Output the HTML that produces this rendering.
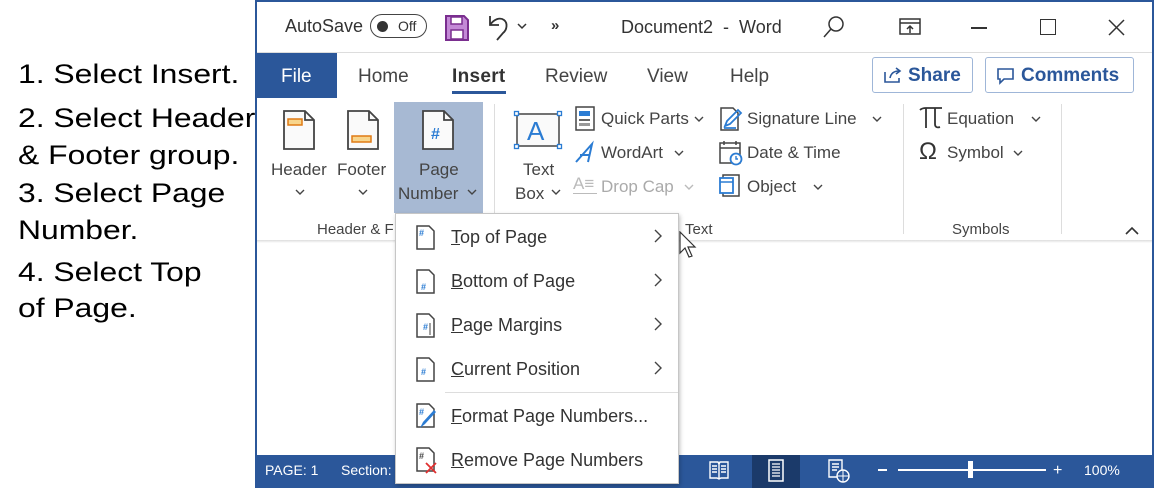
<!DOCTYPE html>
<html><head><meta charset="utf-8"><style>
*{margin:0;padding:0;box-sizing:border-box}
body{width:1154px;height:488px;background:#fff;position:relative;overflow:hidden;font-family:"Liberation Sans",Arial,sans-serif;color:#333}
.a{position:absolute;white-space:nowrap}
.step{font-size:27px;color:#000;line-height:1;transform:scaleX(1.18);transform-origin:left top}
.win{position:absolute;left:255px;top:0;width:899px;height:488px;border:2px solid #2b579a;border-bottom:none;background:#fff}
.t{font-size:18px;color:#333}
.g{font-size:15px;color:#444}
.mi{font-size:18px;color:#333}
.mi u{text-decoration:underline}
</style></head><body>
<div class="win"></div>
<div class="a step" style="left:18px;top:61px">1. Select Insert.</div>
<div class="a step" style="left:18px;top:105px">2. Select Header</div>
<div class="a step" style="left:18px;top:142px">&amp; Footer group.</div>
<div class="a step" style="left:18px;top:180px">3. Select Page</div>
<div class="a step" style="left:18px;top:217px">Number.</div>
<div class="a step" style="left:18px;top:259px">4. Select Top</div>
<div class="a step" style="left:18px;top:295px">of Page.</div>

<div class="a t" style="left:285px;top:16px">AutoSave</div>
<div class="a" style="left:370px;top:14px;width:57px;height:24px;border:1.5px solid #444;border-radius:12px"></div>
<div class="a" style="left:377px;top:21px;width:11px;height:11px;border-radius:50%;background:#333"></div>
<div class="a" style="left:398px;top:18px;font-size:14px;color:#333">Off</div>
<svg class="a" style="left:444px;top:14px" width="26" height="28" viewBox="0 0 26 28"><path d="M2 2h18l4 4v20H2z" fill="#c389d6" stroke="#7a2e8f" stroke-width="2"/><rect x="7" y="3" width="11" height="7" fill="#fff" stroke="#7a2e8f" stroke-width="1.5"/><rect x="7" y="16" width="12" height="9" fill="#fff" stroke="#7a2e8f" stroke-width="1.5"/></svg>
<svg class="a" style="left:486px;top:13px" width="30" height="30" viewBox="0 0 30 30"><path d="M4 3v9h9M4 12c4-6 10-8 14-5s3 10-1 13l-6 7" fill="none" stroke="#333" stroke-width="1.8"/></svg>
<svg class="a" style="left:517px;top:22px" width="10" height="8"><path d="M1 2l4 4 4-4" fill="none" stroke="#333" stroke-width="1.5"/></svg>
<div class="a" style="left:551px;top:17px;font-size:15px;font-weight:bold;color:#333">»</div>
<div class="a t" style="left:621px;top:17px">Document2&nbsp; -&nbsp; Word</div>
<svg class="a" style="left:822px;top:15px" width="24" height="24"><circle cx="14" cy="9" r="7" fill="none" stroke="#333" stroke-width="1.5"/><path d="M9 14l-7 8" stroke="#333" stroke-width="1.5"/></svg>
<svg class="a" style="left:899px;top:18px" width="22" height="18"><rect x="1" y="1" width="20" height="15" fill="none" stroke="#333" stroke-width="1.5"/><path d="M1 5h20M11 15V8M8 11l3-3 3 3" fill="none" stroke="#333" stroke-width="1.5"/></svg>
<div class="a" style="left:971px;top:27px;width:16px;height:1.5px;background:#333"></div>
<div class="a" style="left:1040px;top:19px;width:16px;height:16px;border:1.5px solid #333"></div>
<svg class="a" style="left:1108px;top:19px" width="17" height="17"><path d="M1 1l15 15M16 1L1 16" stroke="#333" stroke-width="1.5"/></svg>
<div class="a" style="left:257px;top:52px;width:895px;height:1px;background:#ddd"></div>
<div class="a" style="left:257px;top:53px;width:80px;height:45px;background:#2b579a"></div>
<div class="a" style="left:281px;top:66px;font-size:19px;color:#fff">File</div>
<div class="a" style="left:358px;top:66px;font-size:19px;color:#444">Home</div>
<div class="a" style="left:452px;top:66px;font-size:19px;color:#333;font-weight:bold;letter-spacing:.3px">Insert</div>
<div class="a" style="left:452px;top:91px;width:54px;height:3px;background:#2b579a"></div>
<div class="a" style="left:545px;top:66px;font-size:19px;color:#444">Review</div>
<div class="a" style="left:647px;top:66px;font-size:19px;color:#444">View</div>
<div class="a" style="left:730px;top:66px;font-size:19px;color:#444">Help</div>
<div class="a" style="left:872px;top:57px;width:101px;height:36px;border:1px solid #9fb6d8;border-radius:3px"></div>
<svg class="a" style="left:883px;top:66px" width="20" height="18"><path d="M2 6v10h14v-4M7 12c1-5 4-7 9-7M13 2l4 3-4 3" fill="none" stroke="#2b579a" stroke-width="1.6"/></svg>
<div class="a" style="left:908px;top:65px;font-size:19px;font-weight:bold;color:#2b579a">Share</div>
<div class="a" style="left:985px;top:57px;width:149px;height:36px;border:1px solid #9fb6d8;border-radius:3px"></div>
<svg class="a" style="left:996px;top:67px" width="20" height="18"><path d="M2 2h15v10H8l-4 4v-4H2z" fill="none" stroke="#2b579a" stroke-width="1.6"/></svg>
<div class="a" style="left:1021px;top:65px;font-size:19px;font-weight:bold;color:#2b579a">Comments</div>
<div class="a" style="left:257px;top:240px;width:895px;height:3px;background:linear-gradient(#ddd,#fff)"></div>
<div class="a" style="left:394px;top:102px;width:89px;height:111px;background:#a7b9d3"></div>
<svg class="a" style="left:282px;top:109px" width="34" height="42"><path d="M2 2h21l9 9v29H2z" fill="#fafafa" stroke="#444" stroke-width="1.8"/><path d="M23 2v9h9" fill="none" stroke="#444" stroke-width="1.8"/><rect x="6" y="10" width="14" height="6" fill="#f8d58c" stroke="#e07b14" stroke-width="1.5"/></svg>
<svg class="a" style="left:346px;top:109px" width="34" height="42"><path d="M2 2h21l9 9v29H2z" fill="#fafafa" stroke="#444" stroke-width="1.8"/><path d="M23 2v9h9" fill="none" stroke="#444" stroke-width="1.8"/><rect x="6" y="27" width="19" height="6" fill="#f8d58c" stroke="#e07b14" stroke-width="1.5"/></svg>
<svg class="a" style="left:421px;top:109px" width="34" height="42"><path d="M2 2h21l9 9v29H2z" fill="#fafafa" stroke="#444" stroke-width="1.8"/><path d="M23 2v9h9" fill="none" stroke="#444" stroke-width="1.8"/><text x="10" y="30" font-size="16" fill="#2b7cd3" font-family="Liberation Sans" font-weight="bold">#</text></svg>
<div class="a g" style="left:271px;top:160px;font-size:17px">Header</div>
<div class="a g" style="left:337px;top:160px;font-size:17px">Footer</div>
<div class="a g" style="left:419px;top:160px;font-size:17px">Page</div>
<div class="a g" style="left:398px;top:184px;font-size:17px">Number</div>
<svg class="a" style="left:295px;top:189px" width="10" height="7"><path d="M1 1l4 4 4-4" fill="none" stroke="#444" stroke-width="1.4"/></svg>
<svg class="a" style="left:358px;top:189px" width="10" height="7"><path d="M1 1l4 4 4-4" fill="none" stroke="#444" stroke-width="1.4"/></svg>
<svg class="a" style="left:467px;top:189px" width="10" height="7"><path d="M1 1l4 4 4-4" fill="none" stroke="#444" stroke-width="1.4"/></svg>
<div class="a g" style="left:317px;top:221px">Header &amp; F</div>
<div class="a" style="left:494px;top:104px;width:1px;height:130px;background:#ddd"></div>
<svg class="a" style="left:513px;top:110px" width="50" height="40"><rect x="4" y="4" width="42" height="32" fill="#fafafa" stroke="#444" stroke-width="1.5"/><text x="14" y="30" font-size="26" fill="#2b7cd3" font-family="Liberation Sans">A</text><g fill="#fff" stroke="#2b7cd3" stroke-width="1.3"><rect x="1.5" y="1.5" width="4" height="4"/><rect x="44.5" y="1.5" width="4" height="4"/><rect x="1.5" y="34.5" width="4" height="4"/><rect x="44.5" y="34.5" width="4" height="4"/></g></svg>
<div class="a g" style="left:523px;top:160px;font-size:17px">Text</div>
<div class="a g" style="left:515px;top:184px;font-size:17px">Box</div>
<svg class="a" style="left:551px;top:189px" width="10" height="7"><path d="M1 1l4 4 4-4" fill="none" stroke="#444" stroke-width="1.4"/></svg>
<svg class="a" style="left:575px;top:106px" width="20" height="26"><rect x="1" y="1" width="18" height="23" fill="#fff" stroke="#444" stroke-width="1.5"/><rect x="4" y="5" width="11" height="5" fill="#2b7cd3"/><rect x="4" y="13" width="11" height="2" fill="#666"/><rect x="4" y="17" width="11" height="3" fill="#999"/></svg>
<div class="a g" style="left:601px;top:109px;font-size:17px">Quick Parts</div>
<svg class="a" style="left:694px;top:116px" width="10" height="7"><path d="M1 1l4 4 4-4" fill="none" stroke="#444" stroke-width="1.4"/></svg>
<svg class="a" style="left:574px;top:140px" width="22" height="26"><path d="M2 22L18 4 14 22M6 15h10" fill="none" stroke="#2b7cd3" stroke-width="2"/></svg>
<div class="a g" style="left:601px;top:143px;font-size:17px">WordArt</div>
<svg class="a" style="left:674px;top:150px" width="10" height="7"><path d="M1 1l4 4 4-4" fill="none" stroke="#444" stroke-width="1.4"/></svg>
<div class="a" style="left:573px;top:174px;font-size:17px;color:#bbb">A&#8801;</div>
<div class="a" style="left:573px;top:193px;width:24px;height:1px;background:#bbb"></div>
<div class="a g" style="left:601px;top:177px;font-size:17px;color:#aaa">Drop Cap</div>
<svg class="a" style="left:684px;top:184px" width="10" height="7"><path d="M1 1l4 4 4-4" fill="none" stroke="#bbb" stroke-width="1.4"/></svg>
<svg class="a" style="left:719px;top:106px" width="24" height="26"><path d="M2 2h12l5 5v17H2z" fill="#fff" stroke="#444" stroke-width="1.5"/><path d="M6 20l2-5 11-11 3 3-11 11z M5 22h12" fill="none" stroke="#2b7cd3" stroke-width="1.8"/></svg>
<div class="a g" style="left:747px;top:109px;font-size:17px">Signature Line</div>
<svg class="a" style="left:872px;top:116px" width="10" height="7"><path d="M1 1l4 4 4-4" fill="none" stroke="#444" stroke-width="1.4"/></svg>
<svg class="a" style="left:718px;top:140px" width="26" height="26"><rect x="2" y="3" width="20" height="20" fill="#fff" stroke="#444" stroke-width="1.5"/><path d="M2 8h20M6 1v4M18 1v4" stroke="#444" stroke-width="1.5"/><circle cx="18" cy="19" r="5.5" fill="#fff" stroke="#2b7cd3" stroke-width="1.8"/><path d="M18 16v3h2" fill="none" stroke="#2b7cd3" stroke-width="1.4"/></svg>
<div class="a g" style="left:747px;top:143px;font-size:17px">Date &amp; Time</div>
<svg class="a" style="left:719px;top:174px" width="22" height="24"><rect x="4" y="1" width="16" height="21" fill="#fff" stroke="#444" stroke-width="1.5"/><rect x="1" y="4" width="13" height="15" fill="#fff" stroke="#2b7cd3" stroke-width="1.8"/><path d="M1 8h13" stroke="#2b7cd3" stroke-width="1.5"/></svg>
<div class="a g" style="left:747px;top:177px;font-size:17px">Object</div>
<svg class="a" style="left:813px;top:184px" width="10" height="7"><path d="M1 1l4 4 4-4" fill="none" stroke="#444" stroke-width="1.4"/></svg>
<div class="a g" style="left:685px;top:221px">Text</div>
<div class="a" style="left:903px;top:104px;width:1px;height:130px;background:#ddd"></div>
<svg class="a" style="left:919px;top:107px" width="24" height="22"><path d="M1 3c2-2 4-2 6-2h16M7 1v20M16 1v16c0 3 2 4 5 3" fill="none" stroke="#333" stroke-width="1.8"/></svg>
<div class="a g" style="left:947px;top:109px;font-size:17px">Equation</div>
<svg class="a" style="left:1031px;top:116px" width="10" height="7"><path d="M1 1l4 4 4-4" fill="none" stroke="#444" stroke-width="1.4"/></svg>
<div class="a" style="left:919px;top:138px;font-size:24px;color:#333">Ω</div>
<div class="a g" style="left:947px;top:143px;font-size:17px">Symbol</div>
<svg class="a" style="left:1013px;top:150px" width="10" height="7"><path d="M1 1l4 4 4-4" fill="none" stroke="#444" stroke-width="1.4"/></svg>
<div class="a g" style="left:952px;top:221px">Symbols</div>
<div class="a" style="left:1061px;top:104px;width:1px;height:130px;background:#ddd"></div>
<svg class="a" style="left:1125px;top:226px" width="14" height="9"><path d="M1 8l6-6 6 6" fill="none" stroke="#333" stroke-width="1.6"/></svg>
<div class="a" style="left:257px;top:455px;width:895px;height:33px;background:#2b579a"></div>
<div class="a" style="left:265px;top:462px;font-size:14px;color:#fff">PAGE: 1</div>
<div class="a" style="left:341px;top:462px;font-size:14px;color:#fff">Section:</div>
<svg class="a" style="left:708px;top:459px" width="22" height="22"><path d="M2 3h8l1 2 1-2h8v16h-7l-2 1-2-1H2z M11 5v14 M4 7h5M4 10h5M4 13h5M13 7h5M13 10h5M13 13h5" fill="none" stroke="#fff" stroke-width="1.4"/></svg>
<div class="a" style="left:752px;top:455px;width:48px;height:33px;background:#1b3a6a"></div>
<svg class="a" style="left:767px;top:459px" width="18" height="24"><rect x="2" y="1" width="14" height="21" fill="none" stroke="#fff" stroke-width="1.5"/><path d="M5 5h8M5 8h8M5 11h8M5 14h8M5 17h8" stroke="#fff" stroke-width="1.3"/></svg>
<svg class="a" style="left:827px;top:459px" width="24" height="24"><path d="M2 1h13v17H2z M5 5h7M5 8h7M5 11h5" fill="none" stroke="#fff" stroke-width="1.4"/><circle cx="16" cy="17" r="6" fill="#2b579a" stroke="#fff" stroke-width="1.4"/><path d="M10 17h12M16 11v12" stroke="#fff" stroke-width="1"/></svg>
<div class="a" style="left:878px;top:469px;width:9px;height:1.5px;background:#fff"></div>
<div class="a" style="left:898px;top:469px;width:148px;height:2px;background:#fff"></div>
<div class="a" style="left:968px;top:461px;width:5px;height:17px;background:#fff"></div>
<div class="a" style="left:1053px;top:462px;font-size:16px;color:#fff">+</div>
<div class="a" style="left:1084px;top:462px;font-size:14px;color:#fff">100%</div>
<div class="a" style="left:395px;top:213px;width:284px;height:271px;background:#fff;border:1px solid #c6c6c6;box-shadow:1px 2px 4px rgba(0,0,0,.25)"></div>
<svg class="a" style="left:416px;top:225px" width="20" height="26"><path d="M1 1h12l5 5v18H1z" fill="#fff" stroke="#444" stroke-width="1.5"/><text x="3" y="11" font-size="9" fill="#2b7cd3" font-weight="bold" font-family="Liberation Sans">#</text></svg>
<div class="a mi" style="left:451px;top:227px"><u>T</u>op of Page</div>
<svg class="a" style="left:654px;top:229px" width="9" height="14"><path d="M1 1l6 6-6 6" fill="none" stroke="#444" stroke-width="1.4"/></svg>
<svg class="a" style="left:416px;top:269px" width="20" height="26"><path d="M1 1h12l5 5v18H1z" fill="#fff" stroke="#444" stroke-width="1.5"/><text x="5" y="21" font-size="9" fill="#2b7cd3" font-weight="bold" font-family="Liberation Sans">#</text></svg>
<div class="a mi" style="left:451px;top:271px"><u>B</u>ottom of Page</div>
<svg class="a" style="left:654px;top:273px" width="9" height="14"><path d="M1 1l6 6-6 6" fill="none" stroke="#444" stroke-width="1.4"/></svg>
<svg class="a" style="left:416px;top:313px" width="20" height="26"><path d="M1 1h12l5 5v18H1z" fill="#fff" stroke="#444" stroke-width="1.5"/><text x="7" y="17" font-size="9" fill="#2b7cd3" font-weight="bold" font-family="Liberation Sans">#</text><path d="M14 10v12" stroke="#444"/></svg>
<div class="a mi" style="left:451px;top:315px"><u>P</u>age Margins</div>
<svg class="a" style="left:654px;top:317px" width="9" height="14"><path d="M1 1l6 6-6 6" fill="none" stroke="#444" stroke-width="1.4"/></svg>
<svg class="a" style="left:416px;top:357px" width="20" height="26"><path d="M1 1h12l5 5v18H1z" fill="#fff" stroke="#444" stroke-width="1.5"/><text x="5" y="18" font-size="9" fill="#2b7cd3" font-weight="bold" font-family="Liberation Sans">#</text></svg>
<div class="a mi" style="left:451px;top:359px"><u>C</u>urrent Position</div>
<svg class="a" style="left:654px;top:361px" width="9" height="14"><path d="M1 1l6 6-6 6" fill="none" stroke="#444" stroke-width="1.4"/></svg>
<div class="a" style="left:445px;top:392px;width:233px;height:1px;background:#ddd"></div>
<svg class="a" style="left:416px;top:403px" width="22" height="28"><path d="M1 1h12l5 5v18H1z" fill="#fff" stroke="#444" stroke-width="1.5"/><text x="3" y="12" font-size="9" fill="#2b7cd3" font-weight="bold" font-family="Liberation Sans">#</text><path d="M4 25l3-6 11-12 2 2-11 12z" fill="#2b7cd3"/></svg>
<div class="a mi" style="left:451px;top:406px"><u>F</u>ormat Page Numbers...</div>
<svg class="a" style="left:416px;top:447px" width="24" height="28"><path d="M1 1h12l5 5v18H1z" fill="#fff" stroke="#444" stroke-width="1.5"/><text x="3" y="12" font-size="9" fill="#444" font-weight="bold" font-family="Liberation Sans">#</text><path d="M10 16l10 10M20 16L10 26" stroke="#e03030" stroke-width="1.8"/></svg>
<div class="a mi" style="left:451px;top:450px"><u>R</u>emove Page Numbers</div>
<svg class="a" style="left:679px;top:231px" width="20" height="30"><path d="M1 1v21l5-5 4 9 3-1-4-9h7z" fill="#fff" stroke="#333" stroke-width="1.2"/></svg>
</body></html>
